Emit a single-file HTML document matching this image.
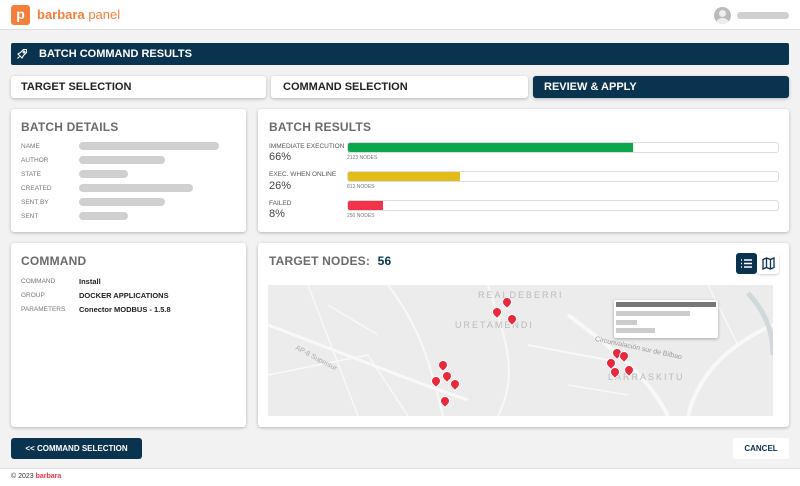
<!DOCTYPE html>
<html><head><style>
*{box-sizing:border-box;margin:0;padding:0}
body{width:800px;height:486px;background:#f2f2f2;font-family:"Liberation Sans",sans-serif;position:relative;overflow:hidden;color:#222}
.abs{position:absolute}
.card{position:absolute;background:#fff;border-radius:3px;box-shadow:0 1px 3px rgba(0,0,0,.25)}
.h{position:absolute;font-size:12px;font-weight:bold;color:#6b6b6b;letter-spacing:.2px}
.lbl{position:absolute;font-size:6.5px;color:#777}
.gb{position:absolute;height:8px;border-radius:4px;background:#d0d0d0}
.val{position:absolute;font-size:7.5px;font-weight:bold;color:#222}
.track{position:absolute;left:347px;width:432px;height:11px;border:1px solid #ddd;border-radius:3px;background:#fff;overflow:hidden}
.fill{height:100%}
.pin{position:absolute;width:10px;height:10px;background:#e8283c;border-radius:50% 50% 50% 0;transform:rotate(-45deg);border:1px solid #fff}
</style></head><body>
<div class="abs" style="left:0;top:0;width:800px;height:30px;background:#fff;border-bottom:1px solid #ddd"></div>
<div class="abs" style="left:11px;top:5px;width:19px;height:20px;background:#f47f3a;border-radius:3px;color:#fff;font-weight:bold;font-size:14px;text-align:center;line-height:19px">p</div>
<div class="abs" style="left:37px;top:7px;font-size:13px;color:#f47f3a"><b>barbara</b> panel</div>
<div class="abs" style="left:714px;top:7px;width:17px;height:17px;border-radius:50%;background:#bbb;overflow:hidden"><div style="width:7px;height:7px;border-radius:50%;background:#eee;margin:3px auto 0"></div><div style="width:13px;height:8px;border-radius:6px 6px 0 0;background:#eee;margin:1px auto 0"></div></div>
<div class="abs" style="left:737px;top:12px;width:52px;height:7px;background:#d0d0d0;border-radius:4px"></div>

<div class="abs" style="left:11px;top:43px;width:778px;height:22px;background:#0a3350;border-radius:2px"></div>
<svg class="abs" style="left:16px;top:48px" width="12" height="12" viewBox="0 0 12 12" fill="none" stroke="#fff" stroke-width="1.1"><path d="M4 8 L2 6 L4.5 4.5 L7.5 1.5 L10.5 1.5 L10.5 4.5 L7.5 7.5 L6 10 Z M1.5 10.5 L3.5 8.5"/><circle cx="8" cy="4" r="0.9"/></svg>
<div class="abs" style="left:39px;top:48px;font-size:11px;font-weight:bold;color:#fff">BATCH COMMAND RESULTS</div>

<div class="card" style="left:11px;top:76px;width:255px;height:22px"></div>
<div class="abs" style="left:21px;top:81px;font-size:11px;font-weight:bold">TARGET SELECTION</div>
<div class="card" style="left:271px;top:76px;width:257px;height:22px"></div>
<div class="abs" style="left:283px;top:81px;font-size:11px;font-weight:bold">COMMAND SELECTION</div>
<div class="card" style="left:533px;top:76px;width:256px;height:22px;background:#0a3350"></div>
<div class="abs" style="left:544px;top:81px;font-size:11px;font-weight:bold;color:#fff">REVIEW &amp; APPLY</div>

<div class="card" style="left:11px;top:109px;width:235px;height:123px"></div>
<div class="h" style="left:21px;top:120px">BATCH DETAILS</div>
<div class="lbl" style="left:21px;top:143px">NAME</div><div class="gb" style="left:79px;top:142px;width:140px"></div>
<div class="lbl" style="left:21px;top:157px">AUTHOR</div><div class="gb" style="left:79px;top:156px;width:86px"></div>
<div class="lbl" style="left:21px;top:171px">STATE</div><div class="gb" style="left:79px;top:170px;width:49px"></div>
<div class="lbl" style="left:21px;top:185px">CREATED</div><div class="gb" style="left:79px;top:184px;width:114px"></div>
<div class="lbl" style="left:21px;top:199px">SENT BY</div><div class="gb" style="left:79px;top:198px;width:86px"></div>
<div class="lbl" style="left:21px;top:213px">SENT</div><div class="gb" style="left:79px;top:212px;width:49px"></div>

<div class="card" style="left:258px;top:109px;width:531px;height:123px"></div>
<div class="h" style="left:269px;top:120px">BATCH RESULTS</div>
<div class="lbl" style="left:269px;top:143px;color:#555">IMMEDIATE EXECUTION</div>
<div class="abs" style="left:269px;top:151px;font-size:11px;color:#444">66%</div>
<div class="track" style="top:142px"><div class="fill" style="width:285px;background:#0aa84a"></div></div>
<div class="lbl" style="left:347px;top:155px;font-size:5px">2123 NODES</div>
<div class="lbl" style="left:269px;top:171px;color:#555">EXEC. WHEN ONLINE</div>
<div class="abs" style="left:269px;top:180px;font-size:11px;color:#444">26%</div>
<div class="track" style="top:171px"><div class="fill" style="width:112px;background:#e2bd1a"></div></div>
<div class="lbl" style="left:347px;top:184px;font-size:5px">813 NODES</div>
<div class="lbl" style="left:269px;top:200px;color:#555">FAILED</div>
<div class="abs" style="left:269px;top:208px;font-size:11px;color:#444">8%</div>
<div class="track" style="top:200px"><div class="fill" style="width:35px;background:#f2334a"></div></div>
<div class="lbl" style="left:347px;top:213px;font-size:5px">250 NODES</div>

<div class="card" style="left:11px;top:243px;width:235px;height:184px"></div>
<div class="h" style="left:21px;top:254px">COMMAND</div>
<div class="lbl" style="left:21px;top:278px">COMMAND</div><div class="val" style="left:79px;top:277px">Install</div>
<div class="lbl" style="left:21px;top:292px">GROUP</div><div class="val" style="left:79px;top:291px">DOCKER APPLICATIONS</div>
<div class="lbl" style="left:21px;top:306px">PARAMETERS</div><div class="val" style="left:79px;top:305px">Conector MODBUS - 1.5.8</div>

<div class="card" style="left:258px;top:243px;width:531px;height:184px"></div>
<div class="h" style="left:269px;top:254px">TARGET NODES: <span style="color:#0a3350;margin-left:4px">56</span></div>
<div class="abs" style="left:736px;top:253px;width:21px;height:21px;background:#0a3350;border-radius:3px"></div>
<svg class="abs" style="left:740px;top:257px" width="13" height="13" viewBox="0 0 13 13" stroke="#fff" stroke-width="1.4"><path d="M1 3h1M4 3h8M1 6.5h1M4 6.5h8M1 10h1M4 10h8"/></svg>
<div class="abs" style="left:757px;top:253px;width:22px;height:21px;background:#fff;border-radius:3px;box-shadow:0 1px 2px rgba(0,0,0,.2)"></div>
<svg class="abs" style="left:762px;top:257px" width="13" height="13" viewBox="0 0 13 13" fill="none" stroke="#0a3350" stroke-width="1.3"><path d="M1 2.5l3.5-1.5 4 1.5 3.5-1.5v9.5l-3.5 1.5-4-1.5-3.5 1.5zM4.5 1v9.5M8.5 2.5V12"/></svg>

<div class="abs" style="left:268px;top:285px;width:505px;height:131px;background:#ececec;overflow:hidden">
<svg width="505" height="131" style="position:absolute;left:0;top:0" fill="none" stroke="#f8f8f8" stroke-width="3">
<path d="M0 40 C80 70 140 95 200 115"/><path d="M300 30 C340 60 380 90 400 131" stroke-width="4"/>
<path d="M120 0 C150 40 160 70 175 131" stroke-width="2"/><path d="M220 0 C240 60 250 90 230 131" stroke-width="2"/>
<path d="M505 40 C460 60 430 90 420 131" stroke-width="4"/><path d="M260 60 L340 75" stroke-width="2"/>
<path d="M40 0 L90 131" stroke-width="1.5"/><path d="M480 8 C500 30 505 50 505 70" stroke="#cfd8da" stroke-width="5"/>
<path d="M0 90 L100 70 L140 131 M60 20 L110 50 M300 100 L360 110 M440 0 L470 60" stroke-width="1.5"/>
</svg>
<div class="abs" style="left:210px;top:5px;font-size:9px;letter-spacing:2px;color:#bbb">REALDEBERRI</div>
<div class="abs" style="left:187px;top:35px;font-size:9px;letter-spacing:2px;color:#bbb">URETAMENDI</div>
<div class="abs" style="left:340px;top:87px;font-size:9px;letter-spacing:2px;color:#bbb">LARRASKITU</div>
<div class="abs" style="left:25px;top:70px;font-size:7px;color:#aaa;transform:rotate(28deg)">AP-8 Supersur</div>
<div class="abs" style="left:326px;top:60px;font-size:7px;color:#999;transform:rotate(12deg)">Circunvalación sur de Bilbao</div>
<div class="abs" style="left:346px;top:15px;width:104px;height:38px;background:#fff;border-radius:2px;box-shadow:0 1px 3px rgba(0,0,0,.3)"></div>
<div class="abs" style="left:348px;top:17px;width:100px;height:5px;background:#777"></div>
<div class="abs" style="left:348px;top:26px;width:74px;height:5px;background:#ccc"></div>
<div class="abs" style="left:348px;top:35px;width:21px;height:5px;background:#ccc"></div>
<div class="abs" style="left:348px;top:43px;width:39px;height:5px;background:#ccc"></div>
<div class="pin" style="left:234px;top:12px"></div><div class="pin" style="left:224px;top:22px"></div><div class="pin" style="left:239px;top:29px"></div>
<div class="pin" style="left:170px;top:75px"></div><div class="pin" style="left:174px;top:86px"></div><div class="pin" style="left:163px;top:91px"></div><div class="pin" style="left:182px;top:94px"></div><div class="pin" style="left:172px;top:111px"></div>
<div class="pin" style="left:344px;top:63px"></div><div class="pin" style="left:351px;top:66px"></div><div class="pin" style="left:338px;top:73px"></div><div class="pin" style="left:342px;top:82px"></div><div class="pin" style="left:356px;top:80px"></div>
</div>

<div class="abs" style="left:11px;top:438px;width:131px;height:21px;background:#0a3350;border-radius:3px;color:#fff;font-size:8px;font-weight:bold;text-align:center;line-height:21px">&lt;&lt; COMMAND SELECTION</div>
<div class="abs" style="left:733px;top:438px;width:56px;height:21px;background:#fff;border-radius:2px;color:#0a3350;font-size:8px;font-weight:bold;text-align:center;line-height:21px">CANCEL</div>

<div class="abs" style="left:0;top:468px;width:800px;height:18px;background:#fff;border-top:1px solid #e0e0e0"></div>
<div class="abs" style="left:11px;top:473px;font-size:7px;color:#333">© 2023 <b style="color:#f2334a">barbara</b></div>
</body></html>
